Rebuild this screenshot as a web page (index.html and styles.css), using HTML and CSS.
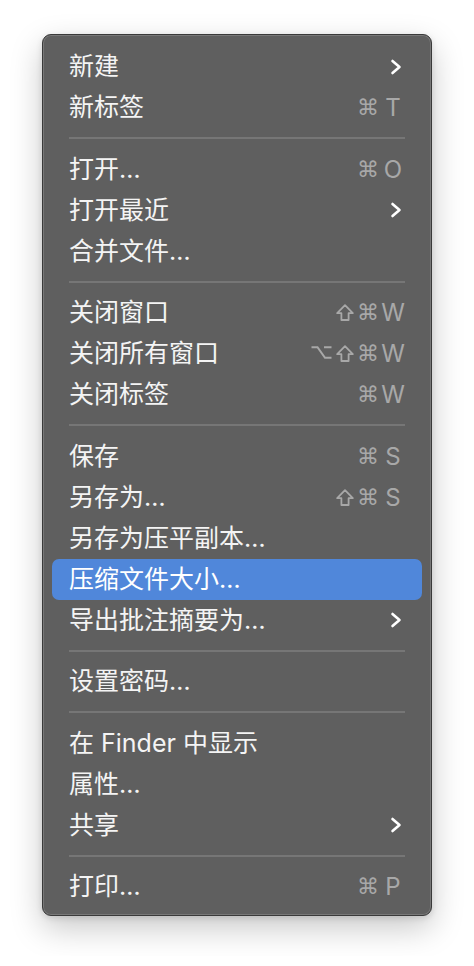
FILE: index.html
```html
<!DOCTYPE html>
<html lang="zh-CN">
<head>
<meta charset="utf-8">
<title>文件菜单</title>
<link rel="stylesheet" href="styles.css">
</head>
<body>
<div class="stage">
  <div class="menu">
    <div class="item"><span class="label">新建</span><svg class="chev" viewBox="0 0 12 16"><polyline points="2.5,2 9.5,8 2.5,14"/></svg></div>
    <div class="item"><span class="label">新标签</span><span class="sc"><span class="mods">⌘</span><span class="key">T</span></span></div>
    <div class="sep"></div>
    <div class="item"><span class="label">打开…</span><span class="sc"><span class="mods">⌘</span><span class="key">O</span></span></div>
    <div class="item"><span class="label">打开最近</span><svg class="chev" viewBox="0 0 12 16"><polyline points="2.5,2 9.5,8 2.5,14"/></svg></div>
    <div class="item"><span class="label">合并文件…</span></div>
    <div class="sep"></div>
    <div class="item"><span class="label">关闭窗口</span><span class="sc"><svg class="shift" viewBox="0 0 18 17"><path d="M9 1.2 L16.8 9.2 H12.6 V16 H5.4 V9.2 H1.2 Z"/></svg><span class="mods">⌘</span><span class="key">W</span></span></div>
    <div class="item"><span class="label">关闭所有窗口</span><span class="sc"><svg class="opt" viewBox="0 0 21 13"><path d="M0.5 1.2 H6.5 L14 11.8 H20.5 M13 1.2 H20.5"/></svg><svg class="shift" viewBox="0 0 18 17"><path d="M9 1.2 L16.8 9.2 H12.6 V16 H5.4 V9.2 H1.2 Z"/></svg><span class="mods">⌘</span><span class="key">W</span></span></div>
    <div class="item"><span class="label">关闭标签</span><span class="sc"><span class="mods">⌘</span><span class="key">W</span></span></div>
    <div class="sep"></div>
    <div class="item"><span class="label">保存</span><span class="sc"><span class="mods">⌘</span><span class="key">S</span></span></div>
    <div class="item"><span class="label">另存为…</span><span class="sc"><svg class="shift" viewBox="0 0 18 17"><path d="M9 1.2 L16.8 9.2 H12.6 V16 H5.4 V9.2 H1.2 Z"/></svg><span class="mods">⌘</span><span class="key">S</span></span></div>
    <div class="item"><span class="label">另存为压平副本…</span></div>
    <div class="item active"><span class="label">压缩文件大小…</span></div>
    <div class="item"><span class="label">导出批注摘要为…</span><svg class="chev" viewBox="0 0 12 16"><polyline points="2.5,2 9.5,8 2.5,14"/></svg></div>
    <div class="sep"></div>
    <div class="item"><span class="label">设置密码…</span></div>
    <div class="sep"></div>
    <div class="item"><span class="label">在 Finder 中显示</span></div>
    <div class="item"><span class="label">属性…</span></div>
    <div class="item"><span class="label">共享</span><svg class="chev" viewBox="0 0 12 16"><polyline points="2.5,2 9.5,8 2.5,14"/></svg></div>
    <div class="sep"></div>
    <div class="item"><span class="label">打印…</span><span class="sc"><span class="mods">⌘</span><span class="key">P</span></span></div>
  </div>
</div>
</body>
</html>
```
FILE: styles.css
```css
html, body {
  margin: 0;
  padding: 0;
  background: #ffffff;
}

.stage {
  padding: 34px 0 40px 42px;
}

.menu {
  box-sizing: border-box;
  width: 390px;
  height: 882px;
  padding: 11px 0;
  background: #5f5f5f;
  border: 1px solid #3a3a3a;
  border-radius: 9px;
  box-shadow: inset 0 0 0 1px rgba(255, 255, 255, 0.16), 0 12px 32px rgba(0, 0, 0, 0.22), 0 2px 6px rgba(0, 0, 0, 0.12);
  font-family: "Inter", "Noto Sans CJK SC", sans-serif;
  font-size: 25px;
  color: #f4f4f4;
}

.item {
  display: flex;
  align-items: center;
  height: 41px;
  margin: 0 9px;
  padding: 0 17px;
  border-radius: 7px;
}

.item.active {
  background: #5087da;
  color: #ffffff;
}

.label {
  flex: 1;
  white-space: nowrap;
  line-height: 41px;
}

.sc {
  display: flex;
  align-items: center;
  color: #a8a8a8;
  font-size: 24px;
}

.mods {
  font-family: "DejaVu Sans", sans-serif;
  font-size: 22px;
  margin-right: 2px;
}

.key {
  width: 24px;
  text-align: center;
  font-family: "Inter", sans-serif;
}

.shift {
  flex: none;
  width: 18px;
  height: 17px;
  margin-right: 3px;
  fill: none;
  stroke: #a8a8a8;
  stroke-width: 1.8;
  stroke-linejoin: round;
}

.opt {
  flex: none;
  width: 21px;
  height: 13px;
  margin-right: 4px;
  margin-bottom: 3px;
  fill: none;
  stroke: #a8a8a8;
  stroke-width: 2;
  stroke-linejoin: miter;
}

.chev {
  flex: none;
  width: 12px;
  height: 16px;
  margin-right: 3px;
  fill: none;
  stroke: #ffffff;
  stroke-width: 2.6;
  stroke-linecap: round;
  stroke-linejoin: round;
}

.sep {
  height: 2px;
  margin: 9.25px 26px;
  background: #767676;
}
```
